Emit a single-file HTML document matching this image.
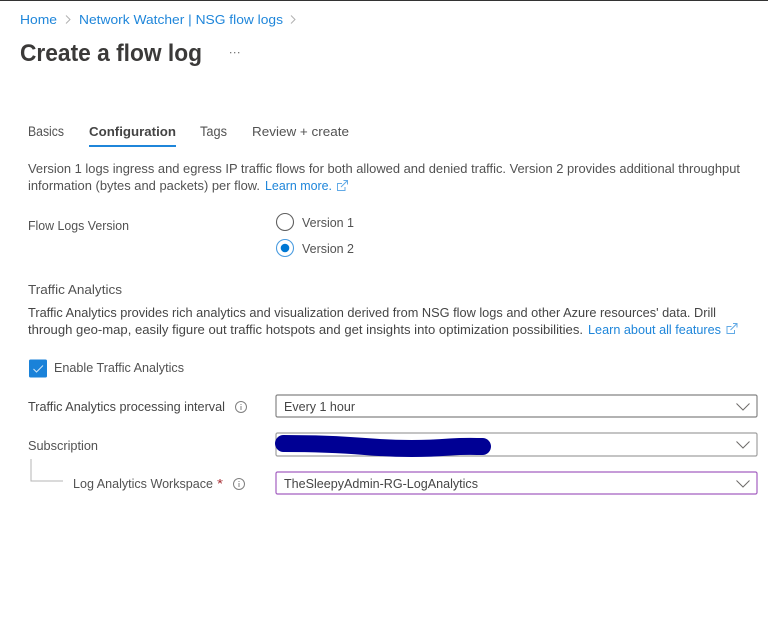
<!DOCTYPE html>
<html><head><meta charset="utf-8"><title>Create a flow log</title>
<style>
html,body{margin:0;padding:0;background:#fff;width:768px;height:620px;overflow:hidden}
svg{display:block}
text{font-family:"Liberation Sans",sans-serif;font-size:12.8px;fill:#525252}
.l{fill:#1f86da}
.a{fill:#454545}
.box{fill:#fff;stroke:#858585;stroke-width:1.200}
.ch{fill:none;stroke:#6e6c6a;stroke-width:1}
</style></head><body>
<svg width="768" height="620" viewBox="0 0 768 620" xmlns="http://www.w3.org/2000/svg" style="filter:blur(.35px)">
<rect x="0" y="0" width="768" height="1" fill="#333"/>
<text class="l" x="20" y="24" style="font-size:13px" textLength="37" lengthAdjust="spacingAndGlyphs">Home</text>
<path d="M66 15.500l4 4l-4 4" fill="none" stroke="#b0b0b0"/>
<text class="l" x="79" y="24" style="font-size:13px" textLength="204" lengthAdjust="spacingAndGlyphs">Network Watcher | NSG flow logs</text>
<path d="M291 15.500l4 4l-4 4" fill="none" stroke="#b0b0b0"/>
<text x="20" y="61" style="font-size:24px;font-weight:bold;fill:#3b3a39" textLength="182" lengthAdjust="spacingAndGlyphs">Create a flow log</text>
<g fill="#7a7a7a"><rect x="230" y="52" width="1.300" height="1.300"/><rect x="234" y="52" width="1.300" height="1.300"/><rect x="238" y="52" width="1.300" height="1.300"/></g>

<text x="28" y="136" style="font-size:13.500px" textLength="36" lengthAdjust="spacingAndGlyphs">Basics</text>
<text x="89" y="136" style="font-size:13px;font-weight:bold;fill:#444" textLength="87" lengthAdjust="spacingAndGlyphs">Configuration</text>
<rect x="89" y="145" width="87" height="2" fill="#1f86da"/>
<text x="200" y="136" style="font-size:13.500px" textLength="27" lengthAdjust="spacingAndGlyphs">Tags</text>
<text x="252" y="136" style="font-size:13px" textLength="97" lengthAdjust="spacingAndGlyphs">Review + create</text>

<text x="28" y="173" textLength="712" lengthAdjust="spacingAndGlyphs">Version 1 logs ingress and egress IP traffic flows for both allowed and denied traffic. Version 2 provides additional throughput</text>
<text x="28" y="190" textLength="232" lengthAdjust="spacingAndGlyphs">information (bytes and packets) per flow.</text>
<text class="l" x="265" y="190" textLength="67" lengthAdjust="spacingAndGlyphs">Learn more.</text>
<g fill="none" stroke="#62aae6" stroke-width="1"><path d="M342 183.500h-4.500v7h7.500v-3.500"/><path d="M341 187l6-6M343.500 180.500h4v4"/></g>

<text x="28" y="230" style="font-size:13px" textLength="101" lengthAdjust="spacingAndGlyphs">Flow Logs Version</text>
<circle cx="285" cy="222" r="8.500" fill="#fff" stroke="#606060" stroke-width="1.100"/>
<text x="302" y="227" textLength="52" lengthAdjust="spacingAndGlyphs">Version 1</text>
<circle cx="285" cy="248" r="8.500" fill="#fff" stroke="#4a9ce0" stroke-width="1.100"/>
<circle cx="285" cy="248" r="4.300" fill="#0078d4"/>
<text x="302" y="253" textLength="52" lengthAdjust="spacingAndGlyphs">Version 2</text>

<text x="28" y="294" style="font-size:13px" textLength="94" lengthAdjust="spacingAndGlyphs">Traffic Analytics</text>
<text class="a" x="28" y="317" textLength="688" lengthAdjust="spacingAndGlyphs">Traffic Analytics provides rich analytics and visualization derived from NSG flow logs and other Azure resources' data. Drill</text>
<text class="a" x="28" y="334" textLength="555" lengthAdjust="spacingAndGlyphs">through geo-map, easily figure out traffic hotspots and get insights into optimization possibilities.</text>
<text class="l" x="588" y="334" textLength="133" lengthAdjust="spacingAndGlyphs">Learn about all features</text>
<g fill="none" stroke="#62aae6" stroke-width="1"><path d="M731.500 326.500h-4.500v7h7.500v-3.500"/><path d="M730.500 330l6-6M733 323.500h4v4"/></g>

<rect x="29" y="359.500" width="18" height="18" rx="1.500" fill="#1a82d9"/>
<path d="M33.500 369l3 3l6.500-6.500" fill="none" stroke="#cfe6f8" stroke-width="1"/>
<text x="54" y="372" textLength="130" lengthAdjust="spacingAndGlyphs">Enable Traffic Analytics</text>

<text class="a" x="28" y="411" textLength="197" lengthAdjust="spacingAndGlyphs">Traffic Analytics processing interval</text>
<circle cx="241" cy="407" r="5.500" fill="none" stroke="#808080"/>
<rect x="240.500" y="406" width="1" height="4" fill="#808080"/><rect x="240.500" y="404" width="1" height="1" fill="#808080"/>
<rect class="box" x="276" y="395" width="481" height="22" rx="1.500"/>
<text class="a" x="284" y="411" textLength="71" lengthAdjust="spacingAndGlyphs">Every 1 hour</text>
<path class="ch" d="M736.500 403.500l6.500 6.500l6.500-6.500"/>

<text x="28" y="450" style="font-size:13px" textLength="70" lengthAdjust="spacingAndGlyphs">Subscription</text>
<rect x="276" y="433" width="481" height="23" rx="1.500" fill="#fff" stroke="#a0a0a0" stroke-width="1.200"/>
<path d="M283.500 443.500C320 443.500 340 444.500 365 446.500C395 449 425 449 450 447C465 446 475 446.500 482.500 446.500" fill="none" stroke="#000094" stroke-width="17" stroke-linecap="round"/>
<path class="ch" d="M736.500 441.500l6.500 6.500l6.500-6.500"/>

<path d="M31 459v22h32" fill="none" stroke="#b5b5b5"/>
<text x="73" y="488" style="font-size:13px" textLength="140" lengthAdjust="spacingAndGlyphs">Log Analytics Workspace</text>
<text x="217" y="488" style="fill:#a4262c" textLength="6" lengthAdjust="spacingAndGlyphs">*</text>
<circle cx="239" cy="484" r="5.500" fill="none" stroke="#808080"/>
<rect x="238.500" y="483" width="1" height="4" fill="#808080"/><rect x="238.500" y="481" width="1" height="1" fill="#808080"/>
<rect x="276" y="472" width="481" height="22" rx="1.500" fill="#fff" stroke="#a45fc0" stroke-width="1.200"/>
<text class="a" x="284" y="488" textLength="194" lengthAdjust="spacingAndGlyphs">TheSleepyAdmin-RG-LogAnalytics</text>
<path class="ch" d="M736.500 480.500l6.500 6.500l6.500-6.500"/>
</svg>
</body></html>
